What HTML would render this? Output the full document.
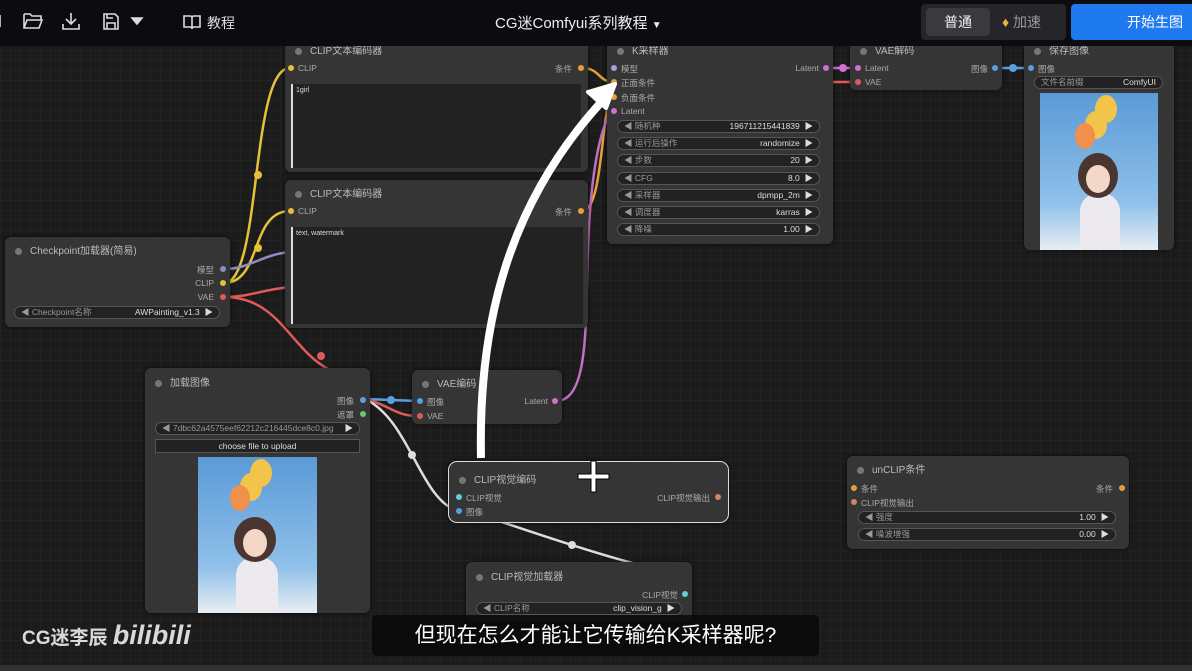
<!DOCTYPE html>
<html><head><meta charset="utf-8"><style>
*{margin:0;padding:0;box-sizing:border-box}
body{width:1192px;height:671px;overflow:hidden;position:relative;font-family:"Liberation Sans","Noto Sans CJK SC",sans-serif;background:#1b1b1b;
background-image:linear-gradient(#222 1px,transparent 1px),linear-gradient(90deg,#222 1px,transparent 1px);background-size:10px 10px;color:#bbb}
.n{position:absolute;background:#353535;border-radius:6px;box-shadow:0 0 4px #000a}
.t{position:absolute;left:10px;font-size:10px;color:#bbb}
.t:before{content:"";display:inline-block;width:7px;height:7px;border-radius:50%;background:#777;margin-right:8px;vertical-align:middle}
.r{position:absolute;font-size:8.5px;color:#aaa;white-space:nowrap}
.d{position:absolute;width:6px;height:6px;border-radius:50%}
.w{position:absolute;height:13px;border-radius:7px;background:#222;border:1px solid #555;font-size:8.5px;color:#ccc;line-height:11px;padding:0 6px}
.w .l{float:left;color:#999}.w .v{float:right;color:#ddd}
.ta{position:absolute;background:#222;border-left:2px solid #ddd;font-size:7px;color:#ddd;padding:3px}
.img{position:absolute;background:linear-gradient(#5a9ad6,#8fc0ea 70%,#e8eef2);overflow:hidden}
.img i{position:absolute;border-radius:50%;display:block}
</style></head><body>
<svg width="1192" height="671" style="position:absolute;left:0;top:0" fill="none">
<g stroke-width="2.5">
<path d="M224 283 C262 283,250 68,290 68" stroke="#e5c13a"/>
<path d="M224 283 C262 283,250 211,290 211" stroke="#e5c13a"/>
<path d="M224 269 C250 269,260 255,290 252" stroke="#8c8cc8"/>
<path d="M224 297 C250 297,260 290,290 287" stroke="#e05a5a"/>
<path d="M224 297 C280 297,290 350,330 370" stroke="#e05a5a"/>
<path d="M582 68 C600 68,598 82,614 82" stroke="#e6a03a"/>
<path d="M582 211 C605 211,600 97,614 97" stroke="#e6a03a"/>
<path d="M556 401 C590 401,585 320,588 250 C590 180,600 120,614 111" stroke="#c070c0"/>
<path d="M826 68 L858 68" stroke="#d070d0"/>
<path d="M833 82 L858 82" stroke="#e05a5a"/>
<path d="M995 68 L1030 68" stroke="#5aa0e0"/>
<path d="M365 399 L418 401" stroke="#5aa0e0"/>
<path d="M365 399 C390 405,395 416,418 416" stroke="#e05a5a"/>
<path d="M365 399 C410 420,420 500,458 511" stroke="#ddd"/>
<path d="M490 518 C540 535,600 555,640 565" stroke="#ddd"/>
</g>
<g fill="#e5c13a"><circle cx="258" cy="175" r="4"/><circle cx="258" cy="248" r="4"/></g>
<circle cx="321" cy="356" r="4" fill="#e05a5a"/>
<circle cx="412" cy="455" r="4" fill="#ddd"/><circle cx="572" cy="545" r="4" fill="#ddd"/>
<circle cx="843" cy="68" r="4" fill="#d070d0"/><circle cx="1013" cy="68" r="4" fill="#5aa0e0"/><circle cx="391" cy="400" r="4" fill="#5aa0e0"/>
</svg>

<div class="n" style="left:285px;top:38px;width:303px;height:134px">
<div class="t" style="top:4px">CLIP文本编码器</div>
<div class="d" style="left:3px;top:27px;background:#e5c13a"></div><div class="r" style="left:13px;top:25px">CLIP</div>
<div class="r" style="right:16px;top:25px">条件</div><div class="d" style="right:4px;top:27px;background:#e6a03a"></div>
<div class="ta" style="left:6px;top:46px;width:290px;height:84px">1girl</div></div>

<div class="n" style="left:285px;top:180px;width:303px;height:148px">
<div class="t" style="top:5px">CLIP文本编码器</div>
<div class="d" style="left:3px;top:28px;background:#e5c13a"></div><div class="r" style="left:13px;top:26px">CLIP</div>
<div class="r" style="right:16px;top:26px">条件</div><div class="d" style="right:4px;top:28px;background:#e6a03a"></div>
<div class="ta" style="left:6px;top:47px;width:292px;height:97px">text, watermark</div></div>

<div class="n" style="left:5px;top:237px;width:225px;height:90px">
<div class="t" style="top:5px">Checkpoint加载器(简易)</div>
<div class="r" style="right:16px;top:27px">模型</div><div class="d" style="right:4px;top:29px;background:#8c8cc8"></div>
<div class="r" style="right:16px;top:41px">CLIP</div><div class="d" style="right:4px;top:43px;background:#e5c13a"></div>
<div class="r" style="right:16px;top:55px">VAE</div><div class="d" style="right:4px;top:57px;background:#e05a5a"></div>
<div class="w" style="left:9px;top:69px;width:206px"><span class="l">◀ Checkpoint名称</span><span class="v">AWPainting_v1.3 &nbsp;▶</span></div></div>

<div class="n" style="left:607px;top:38px;width:226px;height:206px">
<div class="t" style="top:4px">K采样器</div>
<div class="d" style="left:4px;top:27px;background:#aaa0e0"></div><div class="r" style="left:14px;top:25px">模型</div>
<div class="d" style="left:4px;top:41px;background:#e6a03a"></div><div class="r" style="left:14px;top:39px">正面条件</div>
<div class="d" style="left:4px;top:56px;background:#e6a03a"></div><div class="r" style="left:14px;top:54px">负面条件</div>
<div class="d" style="left:4px;top:70px;background:#d070d0"></div><div class="r" style="left:14px;top:68px">Latent</div>
<div class="r" style="right:14px;top:25px">Latent</div><div class="d" style="right:4px;top:27px;background:#d070d0"></div>
<div class="w" style="left:10px;top:82px;width:203px"><span class="l">◀ 随机种</span><span class="v">196711215441839 &nbsp;▶</span></div>
<div class="w" style="left:10px;top:99px;width:203px"><span class="l">◀ 运行后操作</span><span class="v">randomize &nbsp;▶</span></div>
<div class="w" style="left:10px;top:116px;width:203px"><span class="l">◀ 步数</span><span class="v">20 &nbsp;▶</span></div>
<div class="w" style="left:10px;top:134px;width:203px"><span class="l">◀ CFG</span><span class="v">8.0 &nbsp;▶</span></div>
<div class="w" style="left:10px;top:151px;width:203px"><span class="l">◀ 采样器</span><span class="v">dpmpp_2m &nbsp;▶</span></div>
<div class="w" style="left:10px;top:168px;width:203px"><span class="l">◀ 调度器</span><span class="v">karras &nbsp;▶</span></div>
<div class="w" style="left:10px;top:185px;width:203px"><span class="l">◀ 降噪</span><span class="v">1.00 &nbsp;▶</span></div></div>

<div class="n" style="left:850px;top:38px;width:152px;height:52px">
<div class="t" style="top:4px">VAE解码</div>
<div class="d" style="left:5px;top:27px;background:#d070d0"></div><div class="r" style="left:15px;top:25px">Latent</div>
<div class="d" style="left:5px;top:41px;background:#e05a5a"></div><div class="r" style="left:15px;top:39px">VAE</div>
<div class="r" style="right:14px;top:25px">图像</div><div class="d" style="right:4px;top:27px;background:#5aa0e0"></div></div>

<div class="n" style="left:1024px;top:38px;width:150px;height:212px">
<div class="t" style="top:4px">保存图像</div>
<div class="d" style="left:4px;top:27px;background:#5aa0e0"></div><div class="r" style="left:14px;top:25px">图像</div>
<div class="w" style="left:10px;top:38px;width:129px"><span class="l">文件名前缀</span><span class="v">ComfyUI</span></div>
<div class="img" style="left:16px;top:55px;width:118px;height:157px">
<i style="left:55px;top:2px;width:22px;height:28px;background:#f2c54a"></i>
<i style="left:45px;top:18px;width:22px;height:28px;background:#f2c54a"></i>
<i style="left:35px;top:30px;width:20px;height:26px;background:#f0904a"></i>
<i style="left:40px;top:100px;width:40px;height:80px;border-radius:18px 18px 0 0;background:#eceaee"></i>
<i style="left:38px;top:60px;width:40px;height:45px;background:#4a3530"></i>
<i style="left:46px;top:72px;width:24px;height:28px;background:#f3d8c8"></i></div></div>

<div class="n" style="left:145px;top:368px;width:225px;height:245px">
<div class="t" style="top:6px">加载图像</div>
<div class="r" style="right:16px;top:27px">图像</div><div class="d" style="right:4px;top:29px;background:#5aa0e0"></div>
<div class="r" style="right:16px;top:41px">遮罩</div><div class="d" style="right:4px;top:43px;background:#6c6"></div>
<div class="w" style="left:10px;top:54px;width:205px"><span class="l">◀ 7dbc62a4575eef62212c216445dce8c0.jpg</span><span class="v">▶</span></div>
<div style="position:absolute;left:10px;top:71px;width:205px;height:14px;background:#222;border:1px solid #555;font-size:8.5px;color:#ddd;text-align:center;line-height:12px">choose file to upload</div>
<div class="img" style="left:53px;top:89px;width:119px;height:156px">
<i style="left:52px;top:2px;width:22px;height:28px;background:#f2c54a"></i>
<i style="left:42px;top:16px;width:22px;height:28px;background:#f2c54a"></i>
<i style="left:32px;top:28px;width:20px;height:26px;background:#f0904a"></i>
<i style="left:38px;top:100px;width:42px;height:80px;border-radius:18px 18px 0 0;background:#eceaee"></i>
<i style="left:36px;top:60px;width:42px;height:45px;background:#4a3530"></i>
<i style="left:45px;top:72px;width:24px;height:28px;background:#f3d8c8"></i></div></div>

<div class="n" style="left:412px;top:370px;width:150px;height:54px">
<div class="t" style="top:5px">VAE编码</div>
<div class="d" style="left:5px;top:28px;background:#5aa0e0"></div><div class="r" style="left:15px;top:26px">图像</div>
<div class="d" style="left:5px;top:43px;background:#e05a5a"></div><div class="r" style="left:15px;top:41px">VAE</div>
<div class="r" style="right:14px;top:26px">Latent</div><div class="d" style="right:4px;top:28px;background:#d070d0"></div></div>

<div class="n" style="left:448px;top:461px;width:281px;height:62px;border:1.5px solid #ddd;border-radius:9px">
<div class="t" style="top:9px">CLIP视觉编码</div>
<div class="d" style="left:7px;top:32px;background:#6cd"></div><div class="r" style="left:17px;top:30px">CLIP视觉</div>
<div class="d" style="left:7px;top:46px;background:#5aa0e0"></div><div class="r" style="left:17px;top:44px">图像</div>
<div class="r" style="right:18px;top:30px">CLIP视觉输出</div><div class="d" style="right:7px;top:32px;background:#c86"></div></div>

<div class="n" style="left:466px;top:562px;width:226px;height:60px">
<div class="t" style="top:6px">CLIP视觉加载器</div>
<div class="r" style="right:14px;top:27px">CLIP视觉</div><div class="d" style="right:4px;top:29px;background:#6cd"></div>
<div class="w" style="left:10px;top:40px;width:206px"><span class="l">◀ CLIP名称</span><span class="v">clip_vision_g &nbsp;▶</span></div></div>

<div class="n" style="left:847px;top:456px;width:282px;height:93px">
<div class="t" style="top:5px">unCLIP条件</div>
<div class="d" style="left:4px;top:29px;background:#e6a03a"></div><div class="r" style="left:14px;top:27px">条件</div>
<div class="d" style="left:4px;top:43px;background:#c86"></div><div class="r" style="left:14px;top:41px">CLIP视觉输出</div>
<div class="r" style="right:16px;top:27px">条件</div><div class="d" style="right:4px;top:29px;background:#e6a03a"></div>
<div class="w" style="left:11px;top:55px;width:258px"><span class="l">◀ 强度</span><span class="v">1.00 &nbsp;▶</span></div>
<div class="w" style="left:11px;top:72px;width:258px"><span class="l">◀ 噪波增强</span><span class="v">0.00 &nbsp;▶</span></div></div>

<svg width="1192" height="671" style="position:absolute;left:0;top:0">
<path d="M481 458 C478 320,510 200,605 98" stroke="#fff" stroke-width="8" fill="none"/>
<path d="M615 84 L588 92 L606 108 Z" fill="#fff" stroke="#fff" stroke-width="4" stroke-linejoin="round"/>
<path d="M591 461 h5 v13 h13 v5 h-13 v13 h-5 v-13 h-13 v-5 h13 z" fill="#fff" stroke="#000" stroke-width="1"/>
</svg>

<div style="position:absolute;left:0;top:0;width:1192px;height:46px;background:#0c0c10"></div>
<svg width="260" height="46" style="position:absolute;left:0;top:0" fill="none" stroke="#ddd" stroke-width="1.6">
<path d="M0 15 v12"/>
<path d="M24 14 h6 l2 2 h9 v4 M24 14 v14 h15 l3 -8 h-15 l-3 8"/>
<path d="M71 13 v11 M66 19 l5 5 5 -5 M63 24 v5 h16 v-5"/>
<path d="M104 14 h11 l3 3 v12 h-14 z M107 29 v-6 h8 v6 M107 14 v4 h6"/>
<path d="M132 18 h10 l-5 6 z" fill="#ddd"/>
<path d="M184 16 h6 q2 0 2 2 v11 q0 -2 -2 -2 h-6 z M200 16 h-6 q-2 0 -2 2 v11 q0 -2 2 -2 h6 z"/>
</svg>
<div style="position:absolute;left:207px;top:13px;font-size:14px;color:#ddd">教程</div>
<div style="position:absolute;left:495px;top:12px;font-size:15px;color:#eee">CG迷Comfyui系列教程 <span style="font-size:10px">▼</span></div>
<div style="position:absolute;left:921px;top:4px;width:145px;height:36px;background:#26262a;border-radius:4px"></div>
<div style="position:absolute;left:926px;top:8px;width:64px;height:28px;background:#3a3a3e;border-radius:4px;color:#eee;font-size:14px;text-align:center;line-height:28px">普通</div>
<div style="position:absolute;left:1002px;top:12px;font-size:14px;color:#999"><span style="color:#f0b040">♦</span> 加速</div>
<div style="position:absolute;left:1071px;top:4px;width:130px;height:36px;background:#1f7af0;border-radius:4px;color:#fff;font-size:14px;line-height:36px;padding-left:56px">开始生图</div>

<div style="position:absolute;left:22px;top:620px;font-size:19px;font-weight:bold;color:#eee;opacity:.9">CG迷李辰 <span style="font-size:27px;font-style:italic">bilibili</span></div>
<div style="position:absolute;left:372px;top:615px;width:447px;height:41px;background:rgba(8,8,8,.85);border-radius:5px;color:#fff;font-size:21px;text-align:center;line-height:41px">但现在怎么才能让它传输给K采样器呢?</div>
<div style="position:absolute;left:0;top:665px;width:1192px;height:6px;background:#333"></div>
</body></html>
